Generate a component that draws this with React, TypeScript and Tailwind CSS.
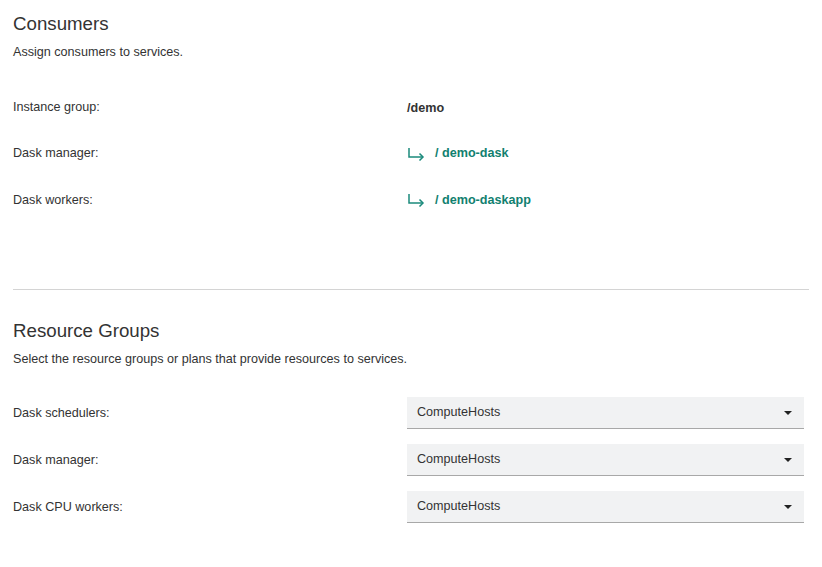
const font = { fontFamily: '"Liberation Sans", Arial, sans-serif' };

function ChildArrow() {
  return (
    <svg width="18" height="14" viewBox="0 0 18 14" fill="none" className="shrink-0">
      <path d="M2 1v9h14" stroke="#1b8a7c" strokeWidth="1.5" />
      <path d="M12.5 6.5l3.5 3.5-3.5 3.5" stroke="#1b8a7c" strokeWidth="1.5" />
    </svg>
  );
}

function Row({ label, children }: { label: string; children: React.ReactNode }) {
  return (
    <div className="flex items-center h-[46.5px]">
      <div className="w-[394px] text-[12.6px] text-[#333]">{label}</div>
      <div className="flex-1">{children}</div>
    </div>
  );
}

function SelectRow({ label, value }: { label: string; value: string }) {
  return (
    <div className="flex items-center">
      <div className="w-[394px] text-[12.6px] text-[#333]">{label}</div>
      <div className="flex items-center justify-between h-[32px] w-[397px] bg-[#f1f2f3] border-b border-[#a8a8a8] pl-[10px] pr-[12px] text-[12.6px] text-[#333]">
        <span>{value}</span>
        <svg width="8" height="4" viewBox="0 0 8 4"><path d="M0 0h8L4 4z" fill="#222" /></svg>
      </div>
    </div>
  );
}

export default function App() {
  return (
    <div className="bg-white w-[822px] h-[567px] px-[13px] pt-[12px]" style={font}>
      {/* Consumers */}
      <h2 className="text-[18.7px] leading-[24px] text-[#333]">Consumers</h2>
      <p className="text-[12.6px] text-[#333] mt-[7px]">Assign consumers to services.</p>
      <div className="mt-[22px]">
        <Row label="Instance group:">
          <span className="text-[12.6px] font-bold text-[#333]">/demo</span>
        </Row>
        <Row label="Dask manager:">
          <span className="flex items-center gap-[10px] text-[12.6px] font-bold text-[#11806f]">
            <ChildArrow />
            <span>/ demo-dask</span>
          </span>
        </Row>
        <Row label="Dask workers:">
          <span className="flex items-center gap-[10px] text-[12.6px] font-bold text-[#11806f]">
            <ChildArrow />
            <span>/ demo-daskapp</span>
          </span>
        </Row>
      </div>

      <div className="mt-[66px] border-t border-[#d4d4d4] w-[796px]" />

      {/* Resource Groups */}
      <h2 className="mt-[29px] text-[18.7px] leading-[24px] text-[#333]">Resource Groups</h2>
      <p className="text-[12.6px] text-[#333] mt-[7px]">Select the resource groups or plans that provide resources to services.</p>
      <div className="mt-[28px] flex flex-col gap-[15px]">
        <SelectRow label="Dask schedulers:" value="ComputeHosts" />
        <SelectRow label="Dask manager:" value="ComputeHosts" />
        <SelectRow label="Dask CPU workers:" value="ComputeHosts" />
      </div>
    </div>
  );
}
